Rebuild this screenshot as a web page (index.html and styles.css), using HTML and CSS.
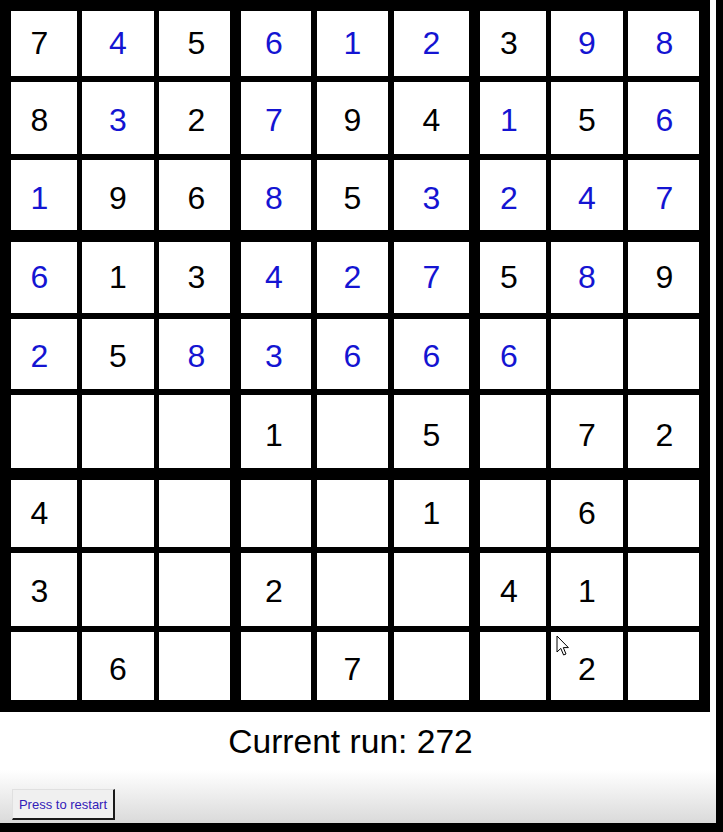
FILE: index.html
```html
<!DOCTYPE html>
<html>
<head>
<meta charset="utf-8">
<title>Sudoku</title>
<link rel="stylesheet" href="styles.css">
</head>
<body>
<div class="window">
  <div class="content">
    <div class="main">
      <div class="board">
        <div class="blk c1 r1">
          <div class="cell">7</div><div class="cell b">4</div><div class="cell">5</div>
          <div class="cell">8</div><div class="cell b">3</div><div class="cell">2</div>
          <div class="cell b">1</div><div class="cell">9</div><div class="cell">6</div>
        </div>
        <div class="blk c2 r1">
          <div class="cell b">6</div><div class="cell b">1</div><div class="cell b">2</div>
          <div class="cell b">7</div><div class="cell">9</div><div class="cell">4</div>
          <div class="cell b">8</div><div class="cell">5</div><div class="cell b">3</div>
        </div>
        <div class="blk c3 r1">
          <div class="cell">3</div><div class="cell b">9</div><div class="cell b">8</div>
          <div class="cell b">1</div><div class="cell">5</div><div class="cell b">6</div>
          <div class="cell b">2</div><div class="cell b">4</div><div class="cell b">7</div>
        </div>
        <div class="blk c1 r2">
          <div class="cell b">6</div><div class="cell">1</div><div class="cell">3</div>
          <div class="cell b">2</div><div class="cell">5</div><div class="cell b">8</div>
          <div class="cell"></div><div class="cell"></div><div class="cell"></div>
        </div>
        <div class="blk c2 r2">
          <div class="cell b">4</div><div class="cell b">2</div><div class="cell b">7</div>
          <div class="cell b">3</div><div class="cell b">6</div><div class="cell b">6</div>
          <div class="cell">1</div><div class="cell"></div><div class="cell">5</div>
        </div>
        <div class="blk c3 r2">
          <div class="cell">5</div><div class="cell b">8</div><div class="cell">9</div>
          <div class="cell b">6</div><div class="cell"></div><div class="cell"></div>
          <div class="cell"></div><div class="cell">7</div><div class="cell">2</div>
        </div>
        <div class="blk c1 r3">
          <div class="cell">4</div><div class="cell"></div><div class="cell"></div>
          <div class="cell">3</div><div class="cell"></div><div class="cell"></div>
          <div class="cell"></div><div class="cell">6</div><div class="cell"></div>
        </div>
        <div class="blk c2 r3">
          <div class="cell"></div><div class="cell"></div><div class="cell">1</div>
          <div class="cell">2</div><div class="cell"></div><div class="cell"></div>
          <div class="cell"></div><div class="cell">7</div><div class="cell"></div>
        </div>
        <div class="blk c3 r3">
          <div class="cell"></div><div class="cell">6</div><div class="cell"></div>
          <div class="cell">4</div><div class="cell">1</div><div class="cell"></div>
          <div class="cell"></div><div class="cell">2</div><div class="cell"></div>
        </div>
      </div>
      <div class="status">Current run: 272</div>
      <div class="spacer"></div>
      <div class="footer">
        <button class="restart">Press to restart</button>
      </div>
    </div>
    <div class="rightbar"></div>
  </div>
  <div class="bottombar"></div>
  <svg class="cursor" width="14" height="22" viewBox="0 0 14 22">
    <path d="M1 1 L1 17 L4.8 13.4 L7.6 20 L10 19 L7.3 12.6 L12.4 12.6 Z" fill="#fff" stroke="#000" stroke-width="1" stroke-linejoin="miter"/>
  </svg>
</div>
</body>
</html>
```

FILE: styles.css
```css
html, body {
  margin: 0;
  padding: 0;
  background: #fff;
}

.window {
  position: relative;
  width: 723px;
  height: 832px;
  display: flex;
  flex-direction: column;
  overflow: hidden;
}

.content {
  display: flex;
  flex: 1;
}

.main {
  width: 716px;
  display: flex;
  flex-direction: column;
  background: linear-gradient(to bottom, #ffffff 0, #ffffff 770px, #dadada 823px);
}

.rightbar {
  flex: 1;
  background: #000;
}

.bottombar {
  height: 9px;
  background: #000;
}

.board {
  width: 710px;
  box-sizing: border-box;
  background: #000;
  padding: 11px 11px 12px 11px;
  display: grid;
  grid-template-columns: 219px 228px 219px;
  grid-template-rows: 219px 226px 220px;
  column-gap: 11px;
  row-gap: 12px;
}

.blk {
  display: grid;
}

.c1, .c3 {
  grid-template-columns: 66px 72px 71px;
  column-gap: 5px;
}

.c2 {
  grid-template-columns: 70px 71px 75px;
  column-gap: 6px;
}

.r1 {
  grid-template-rows: 65px 72px 70px;
  row-gap: 6px;
}

.r2 {
  grid-template-rows: 71px 70px 73px;
  row-gap: 6px;
}

.r3 {
  grid-template-rows: 67px 73px 68px;
  row-gap: 6px;
}

.cell {
  background: #fff;
  display: flex;
  align-items: center;
  justify-content: center;
  font-family: "Liberation Sans", Arial, sans-serif;
  font-size: 32px;
  color: #000;
  box-sizing: border-box;
}

.cell.b {
  color: #1414d2;
}

.c1 .cell:nth-child(3n+1) { padding-right: 9px; }
.c1 .cell:nth-child(3n) { padding-left: 4px; }
.c2 .cell:nth-child(3n+1) { padding-right: 4px; }
.c3 .cell:nth-child(3n+1) { padding-right: 8px; }
.c3 .cell:nth-child(3n) { padding-left: 2px; }

.blk .cell:nth-child(n+4) { padding-top: 4px; }
.blk .cell:nth-child(n+7) { padding-top: 7px; }

.status {
  width: 701px;
  margin-top: 11px;
  text-align: center;
  font-family: "Liberation Sans", Arial, sans-serif;
  font-size: 33.6px;
  color: #000;
}

.spacer {
  flex: 1;
}

.footer {
  padding: 0 0 3px 12px;
  display: flex;
}

.restart {
  width: 103px;
  height: 31px;
  padding: 0;
  margin: 0;
  background: #f0f0f0;
  border-style: solid;
  border-width: 1px 2px 2px 1px;
  border-color: #e0e0e0 #1a1a1a #1a1a1a #e0e0e0;
  font-family: "Liberation Sans", Arial, sans-serif;
  font-size: 13px;
  color: #3320b8;
  text-align: center;
}

.cursor {
  position: absolute;
  left: 556px;
  top: 635px;
}
```
